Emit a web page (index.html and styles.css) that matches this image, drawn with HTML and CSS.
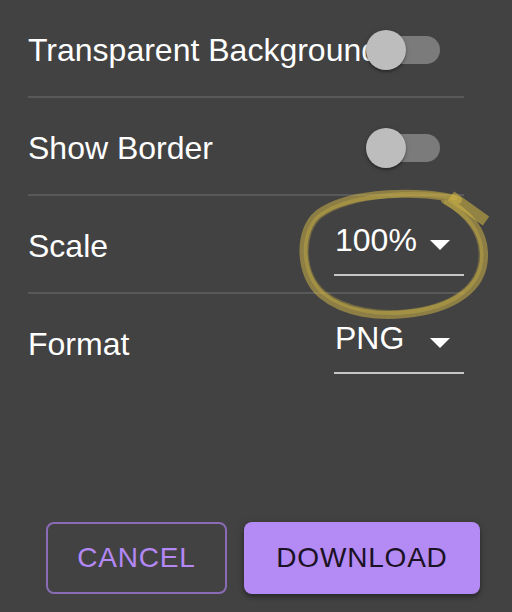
FILE: index.html
```html
<!DOCTYPE html>
<html>
<head>
<meta charset="utf-8">
<link rel="stylesheet" href="styles.css">
</head>
<body>
<div class="page">
  <div class="rows">
    <div class="row">
      <span class="label">Transparent Background</span>
      <span class="switch"><span class="track"></span><span class="thumb"></span></span>
    </div>
    <div class="row">
      <span class="label">Show Border</span>
      <span class="switch"><span class="track"></span><span class="thumb"></span></span>
    </div>
    <div class="row">
      <span class="label">Scale</span>
      <div class="select">
        <span class="value">100%</span>
        <svg class="arrow" width="20" height="10" viewBox="0 0 20 10"><path d="M0 0 L10 10 L20 0 Z" fill="#fff"/></svg>
      </div>
    </div>
    <div class="row last">
      <span class="label">Format</span>
      <div class="select">
        <span class="value">PNG</span>
        <svg class="arrow" width="20" height="10" viewBox="0 0 20 10"><path d="M0 0 L10 10 L20 0 Z" fill="#fff"/></svg>
      </div>
    </div>
  </div>
  <div class="actions">
    <button class="btn cancel">CANCEL</button>
    <button class="btn download">DOWNLOAD</button>
  </div>
  <svg class="annot" width="512" height="612" viewBox="0 0 512 612">
    <path d="M458 200 C 425 190, 350 190, 318 214 C 298 230, 298 275, 322 295 C 345 314, 380 317, 405 314 C 450 310, 486 290, 484 252 C 483 232, 472 215, 445 200" fill="none" stroke="rgba(214,186,70,0.5)" stroke-width="8" stroke-linecap="round"/>
    <path d="M455 198 C 420 191, 352 193, 320 216 C 301 232, 301 273, 324 293 C 347 311, 382 314, 405 312 C 448 308, 483 289, 481 252 C 480 234, 470 217, 446 202" fill="none" stroke="rgba(214,186,70,0.3)" stroke-width="5" stroke-linecap="round"/>
    <path d="M451 196 L486 221" fill="none" stroke="rgba(214,186,70,0.55)" stroke-width="11" stroke-linecap="butt"/>
  </svg>
</div>
</body>
</html>
```

FILE: styles.css
```css
html, body {
  margin: 0;
  padding: 0;
  background: #424242;
}

body {
  font-family: "Liberation Sans", Arial, sans-serif;
  color: #ffffff;
}

.page {
  position: relative;
  width: 512px;
  height: 612px;
  display: flex;
  flex-direction: column;
  overflow: hidden;
}

.rows {
  padding: 0 48px 0 28px;
}

.row {
  height: 92px;
  padding-top: 4px;
  border-bottom: 2px solid #595959;
  display: flex;
  align-items: center;
}

.row.last {
  border-bottom: none;
}

.label {
  flex: 1 1 0;
  min-width: 0;
  white-space: nowrap;
  font-size: 32px;
  line-height: 37px;
}

.switch {
  position: relative;
  width: 74px;
  height: 40px;
  margin-right: 24px;
  flex: none;
}

.track {
  position: absolute;
  left: 6px;
  top: 6px;
  width: 68px;
  height: 28px;
  border-radius: 14px;
  background: #7b7b7b;
}

.thumb {
  position: absolute;
  left: 0;
  top: 0;
  width: 40px;
  height: 40px;
  border-radius: 50%;
  background: #bdbdbd;
  box-shadow: 0 2px 2px rgba(0,0,0,0.25), 0 1px 5px rgba(0,0,0,0.2);
}

.select {
  flex: none;
  width: 130px;
  padding: 6px 0 15px 0;
  border-bottom: 2px solid #c6c6c6;
  display: flex;
  align-items: center;
  justify-content: space-between;
}

.value {
  font-size: 32px;
  line-height: 37px;
  padding-left: 1px;
}

.arrow {
  margin-right: 14px;
  margin-top: 9px;
}

.actions {
  margin-top: auto;
  padding: 0 32px 18px 0;
  display: flex;
  justify-content: flex-end;
  gap: 17px;
}

.btn {
  height: 72px;
  font-family: "Liberation Sans", Arial, sans-serif;
  font-size: 28px;
  letter-spacing: 0.8px;
  border-radius: 8px;
  padding: 0;
  display: flex;
  align-items: center;
  justify-content: center;
}

.cancel {
  width: 181px;
  background: transparent;
  border: 2px solid #8a6bb6;
  color: #b388f5;
}

.download {
  width: 236px;
  background: #b48af4;
  border: none;
  color: #1b1226;
  box-shadow: 0 3px 4px rgba(0,0,0,0.3), 0 1px 8px rgba(0,0,0,0.15);
}

.annot {
  position: absolute;
  left: 0;
  top: 0;
  pointer-events: none;
}
```
